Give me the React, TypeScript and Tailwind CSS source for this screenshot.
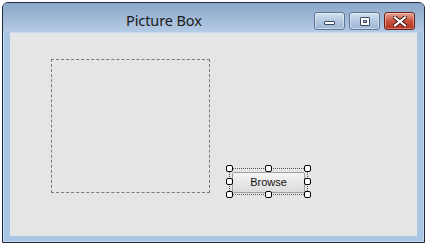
export default function App() {
  return (
    <div className="flex h-[245px] w-[426px] bg-white p-[2px] pr-[1px]">
      <div className="flex flex-1 flex-col rounded-t-[6px] border border-[#1f2a3a] bg-[#a9c5e4] shadow-[inset_0_0_0_1px_rgba(255,255,255,0.35)]">
        {/* title bar */}
        <div className="flex h-[29px] items-start rounded-t-[5px] bg-gradient-to-b from-[#8ba6c9] to-[#b4cbe4] pl-[123px] pr-[9px]">
          <span
            className="mt-[8px] text-[14.5px] leading-[18px] tracking-[-0.1px] text-[#1a1a1a]"
            style={{ fontFamily: '"Noto Sans", "Open Sans", sans-serif' }}
          >
            Picture Box
          </span>
          <div className="ml-auto mt-[9px] flex gap-[4px]">
            <div className="flex h-[18px] w-[31px] items-end justify-center rounded-[3px] border border-[#5f7594] bg-gradient-to-b from-[#d3e1f1] via-[#b3c8e1] to-[#9cb5d4] pb-[4px] shadow-[inset_0_0_0_1px_rgba(255,255,255,0.45)]">
              <div className="h-[4px] w-[11px] rounded-[1px] border border-[#3c4a5e] bg-white" />
            </div>
            <div className="flex h-[18px] w-[31px] items-center justify-center rounded-[3px] border border-[#5f7594] bg-gradient-to-b from-[#d3e1f1] via-[#b3c8e1] to-[#9cb5d4] shadow-[inset_0_0_0_1px_rgba(255,255,255,0.45)]">
              <div className="flex h-[9px] w-[10px] items-center justify-center rounded-[1px] border border-[#3c4a5e] bg-white">
                <div className="h-[3px] w-[4px] border border-[#3c4a5e] bg-[#b9cde4]" />
              </div>
            </div>
            <div className="flex h-[18px] w-[31px] items-center justify-center rounded-[3px] border border-[#6b1f18] bg-gradient-to-b from-[#e7a698] via-[#c9523f] to-[#b8321f] shadow-[inset_0_0_0_1px_rgba(255,255,255,0.35)]">
              <svg width="14" height="11" viewBox="0 0 14 11">
                <path
                  d="M2 1.5 L12 9.5 M12 1.5 L2 9.5"
                  stroke="#3a1410"
                  strokeWidth="4"
                  strokeLinecap="square"
                />
                <path
                  d="M2 1.5 L12 9.5 M12 1.5 L2 9.5"
                  stroke="#ffffff"
                  strokeWidth="2.2"
                  strokeLinecap="square"
                />
              </svg>
            </div>
          </div>
        </div>

        {/* client area */}
        <div className="mb-[6px] ml-[7px] mr-[7px] flex flex-1 items-start border-t border-[#c9d8ea] bg-[#e5e5e5]">
          <div className="ml-[41px] mt-[26px] h-[134px] w-[159px] border border-dashed border-[#7a7a7a]" />

          <div className="relative ml-[16px] mt-[132px] h-[33px] w-[85px]">
            <div className="absolute left-[3px] top-[3px] h-[27px] w-[79px] border border-dotted border-[#555]" />
            <div
              className="absolute left-[6px] top-[7px] flex h-[21px] w-[73px] items-center justify-center rounded-[2px] border border-[#a0a0a0] bg-gradient-to-b from-[#f4f4f4] to-[#dcdcdc] text-[11px] text-[#111]"
              style={{ fontFamily: '"Liberation Sans", Arial, sans-serif' }}
            >
              Browse
            </div>
            {[
              "left-0 top-0",
              "left-[39px] top-0",
              "left-[78px] top-0",
              "left-0 top-[13px]",
              "left-[78px] top-[13px]",
              "left-0 top-[26px]",
              "left-[39px] top-[26px]",
              "left-[78px] top-[26px]",
            ].map((pos) => (
              <div
                key={pos}
                className={`absolute ${pos} h-[7px] w-[7px] rounded-[2px] border border-black bg-white`}
              />
            ))}
          </div>
        </div>
      </div>
    </div>
  );
}
